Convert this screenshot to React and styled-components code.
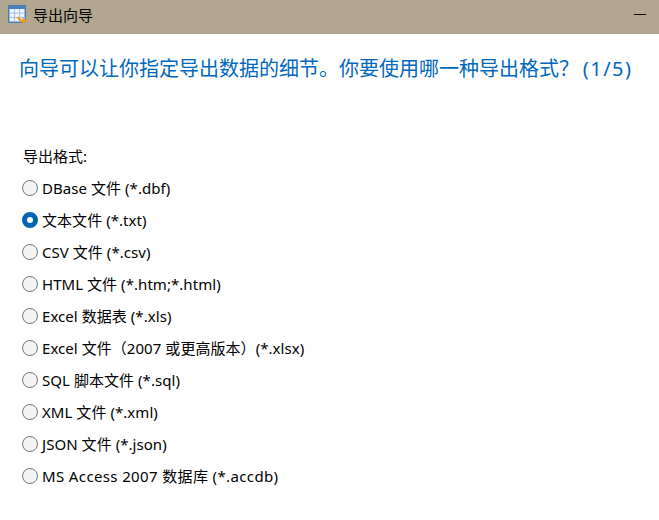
import React from "react";
import styled, { createGlobalStyle } from "styled-components";

const Global = createGlobalStyle`
  html, body { margin: 0; padding: 0; background: #fff; overflow: hidden; }
`;

const Window = styled.div`
  width: 659px;
  height: 520px;
  display: flex;
  flex-direction: column;
  background: #fff;
  font-family: "Noto Sans", "Noto Sans CJK SC", sans-serif;
`;

const TitleBar = styled.div`
  height: 34px;
  background: #b2a68f;
  display: flex;
  align-items: center;
  padding: 0 13px 4px 8px;
  box-sizing: border-box;
  color: #000;
`;

const TitleText = styled.span`
  font-size: 15px;
  margin: 0 0 2px 5px;
  flex: 1;
`;

const Heading = styled.h1`
  margin: 0;
  padding: 20px 0 0 19px;
  font-size: 20px;
  line-height: 30px;
  font-weight: 400;
  color: #0067c0;
  white-space: nowrap;
`;

const Progress = styled.span`
  margin-left: -3px;
  letter-spacing: 1.5px;
`;

const Form = styled.div`
  padding: 62px 0 0 22px;
`;

const GroupLabel = styled.div`
  font-size: 15px;
  line-height: 20px;
  padding-left: 1px;
  margin-bottom: 5px;
  color: #000;
`;

const Option = styled.label`
  height: 32px;
  display: flex;
  align-items: center;
  font-size: 15px;
  letter-spacing: ${(p) => (p.$wide ? "0.37px" : "0.05px")};
  color: #000;
  white-space: nowrap;
`;

const Radio = styled.span`
  width: 16px;
  height: 16px;
  box-sizing: border-box;
  border-radius: 50%;
  margin: 2px 4px 0 0;
  flex: none;
  background: ${(p) => (p.$on ? "#fff" : "#f4f4f4")};
  border: ${(p) => (p.$on ? "5px solid #0063b1" : "1px solid #757575")};
`;

const AppIcon = () => (
  <svg width="20" height="20" viewBox="0 0 20 20">
    <rect x="0" y="0" width="18" height="18" fill="#4a80ba" />
    <rect x="1.500" y="4" width="15" height="12.500" fill="#f2f6fc" />
    <path d="M6.500 4v12.500M11.500 4v12.500M1.500 8h15M1.500 12.500h15" stroke="#9fc0e4" strokeWidth="1" />
    <path d="M10 12c1 2.500 2.500 3.800 5 3.800" stroke="#f39a1e" strokeWidth="2.200" fill="none" />
    <path d="M14.500 12.500l5 3.500-5 3z" fill="#f39a1e" />
  </svg>
);

const options = [
  "DBase 文件 (*.dbf)",
  "文本文件 (*.txt)",
  "CSV 文件 (*.csv)",
  "HTML 文件 (*.htm;*.html)",
  "Excel 数据表 (*.xls)",
  "Excel 文件（2007 或更高版本）(*.xlsx)",
  "SQL 脚本文件 (*.sql)",
  "XML 文件 (*.xml)",
  "JSON 文件 (*.json)",
  "MS Access 2007 数据库 (*.accdb)",
];

export default function App() {
  return (
    <Window>
      <Global />
      <TitleBar>
        <AppIcon />
        <TitleText>导出向导</TitleText>
        <svg width="12" height="2" viewBox="0 0 12 2"><rect width="12" height="1" fill="#000" /></svg>
      </TitleBar>
      <Heading>向导可以让你指定导出数据的细节。你要使用哪一种导出格式？<Progress> (1/5)</Progress></Heading>
      <Form>
        <GroupLabel>导出格式:</GroupLabel>
        {options.map((o, i) => (
          <Option key={o} $wide={i === 9}>
            <Radio $on={i === 1} />
            {o}
          </Option>
        ))}
      </Form>
    </Window>
  );
}
